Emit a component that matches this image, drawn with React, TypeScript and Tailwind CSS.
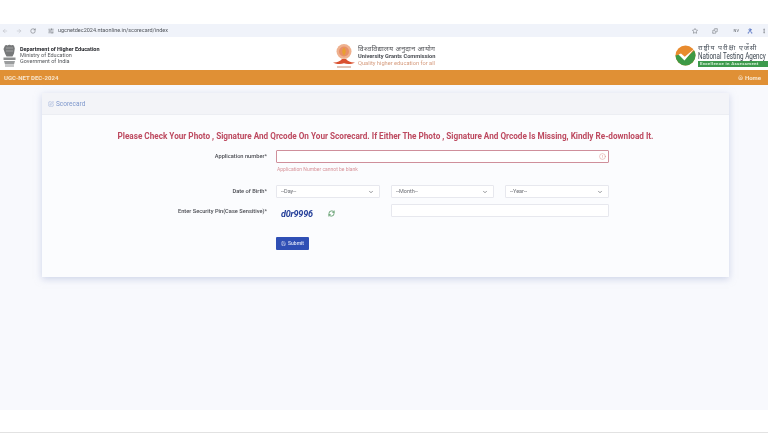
import { ArrowLeft, ArrowRight, RotateCw, SlidersHorizontal, Star, Puzzle, User, EllipsisVertical, ChevronDown, CircleAlert, RefreshCw, Save, SquarePen, House } from "lucide-react";

const font = { fontFamily: '"Roboto", "Liberation Sans", sans-serif' };
const hindi = { fontFamily: '"Noto Sans", "DejaVu Sans", serif' };

function Emblem() {
  return (
    <svg width="15" height="24" viewBox="0 0 15 24" fill="none" className="shrink-0">
      <path d="M3 1.500c1-.8 2-.6 2.600 0 .6-1 3-1 3.600 0 .8-.6 2-.6 2.800.2l.8 2.800-.8 5-1.500 3H4.500L3 9.500 1.500 5z" fill="#77797a" />
      <path d="M4 4h7M4 7h7" stroke="#a9abac" strokeWidth=".8" />
      <path d="M1.500 13.500h12v2.500h-12z" fill="#8c8e8f" />
      <path d="M2 17h11l-1 3.500H3z" fill="#9a9c9d" />
      <path d="M3 22h9" stroke="#a3a5a6" strokeWidth="1.200" />
    </svg>
  );
}

function UgcLogo() {
  return (
    <svg width="24" height="26" viewBox="0 0 24 26" fill="none" className="shrink-0">
      <circle cx="12" cy="8.500" r="7.500" fill="#eeb18f" />
      <circle cx="12" cy="8.500" r="5" fill="#e88f68" />
      <path d="M12 4.500c2 2 2.600 5 0 8-2.600-3-2-6 0-8z" fill="#e8a02f" />
      <path d="M1 19.500c4 .3 7-1 9-3.500h4c2 2.500 5 3.800 9 3.500-3.500 1.800-8 2-11 .8-3 1.200-7.500 1-11-.8z" fill="#d9502f" />
      <path d="M5 24h14" stroke="#c58b70" strokeWidth="1" />
    </svg>
  );
}

function NtaLogo() {
  return (
    <svg width="21" height="21" viewBox="0 0 21 21" fill="none" className="shrink-0">
      <circle cx="10.500" cy="10.500" r="10" fill="#e88b2e" />
      <path d="M.5 10.500a10 10 0 0 0 20 0c0-1.800-.5-3.500-1.300-5L10 14 5 9.500z" fill="#3d9a45" />
      <path d="M3.500 9.500 9.500 15.500 19.500 3.500 9.800 11.800 6 8.500z" fill="#fff" />
    </svg>
  );
}

function Toolbar() {
  return (
    <div className="h-[13px] bg-[#f0f3fa] flex items-center text-[#5f6368]">
      <div className="flex items-center w-[44px] justify-between pl-[2px] pr-[8px]">
        <ArrowLeft size={6} strokeWidth={1.500} className="text-[#a0a4aa]" />
        <ArrowRight size={6} strokeWidth={1.500} className="text-[#a0a4aa]" />
        <RotateCw size={6} strokeWidth={2} />
      </div>
      <div className="flex-1 h-[13px] flex items-center pl-[4px] gap-[4px]">
        <SlidersHorizontal size={6} strokeWidth={2} />
        <span className="text-[5.500px] leading-none text-[#50545a]">ugcnetdec2024.ntaonline.in/scorecard/index</span>
      </div>
      <div className="flex items-center pr-[1px]">
        <Star size={6} strokeWidth={2} />
        <Puzzle size={6} strokeWidth={2} className="ml-[14px]" />
        <span className="text-[4px] leading-none ml-[16px]">NV</span>
        <User size={6} strokeWidth={3} className="text-[#3f5fb8] ml-[8px]" />
        <EllipsisVertical size={6} strokeWidth={2} className="ml-[8px]" />
      </div>
    </div>
  );
}

function Header() {
  return (
    <div className="h-[30px] bg-white flex items-center pt-[1px]">
      <div className="flex items-center w-[332px] pl-[2px] gap-[3px] shrink-0">
        <Emblem />
        <div className="flex flex-col text-[5.500px] leading-[6px] text-[#55585c] pb-[2px]">
          <span className="font-bold text-[#1d1f24]">Department of Higher Education</span>
          <span>Ministry of Education</span>
          <span>Government of India</span>
        </div>
      </div>
      <div className="flex items-center flex-1 gap-[2px]">
        <UgcLogo />
        <div className="flex flex-col text-[5.700px] leading-[7px] text-[#4d4f53]">
          <span className="text-[7px] leading-[8px] tracking-[.3px]" style={hindi}>विश्वविद्यालय अनुदान आयोग</span>
          <span className="font-bold text-[#494c52]">University Grants Commission</span>
          <span className="text-[#d59a7c]">Quality higher education for all</span>
        </div>
      </div>
      <div className="flex items-center w-[93px] gap-[2px] shrink-0">
        <NtaLogo />
        <div className="flex flex-col w-[70px] shrink-0 whitespace-nowrap">
          <span className="text-[7px] leading-[8px] text-[#48505a] tracking-[.9px]" style={hindi}>राष्ट्रीय परीक्षा एजेंसी</span>
          <span className="text-[8.500px] leading-[9px] text-[#3c4650] self-start origin-left scale-x-[0.74]">National Testing Agency</span>
          <span className="bg-[#3d9a4d] text-[#d8f0d8] text-[4.400px] leading-[6px] h-[6px] pl-[2px] font-bold tracking-[.3px]">Excellence in Assessment</span>
        </div>
      </div>
    </div>
  );
}

function SelectBox({ label, width }: { label: string; width: string }) {
  return (
    <div className={`${width} h-[13px] bg-white border border-[#e7e8ee] rounded-[1px] flex items-center justify-between pl-[4px] pr-[5px] text-[5.500px] text-[#6b6d73]`}>
      <span>{label}</span>
      <ChevronDown size={6} strokeWidth={2.500} className="text-[#55585e]" />
    </div>
  );
}

function Form() {
  return (
    <div className="flex flex-col">
      <h2 className="mt-[14px] text-center text-[8.180px] leading-[14px] font-bold text-[#bd4a60] whitespace-nowrap">
        Please Check Your Photo , Signature And Qrcode On Your Scorecard. If Either The Photo , Signature And Qrcode Is Missing, Kindly Re-download It.
      </h2>

      <div className="mt-[6px] flex items-center h-[14px]">
        <label className="w-[225px] mr-[9px] text-right text-[5.700px] font-medium text-[#4c4e54]">Application number*</label>
        <div className="w-[333px] h-[13px] bg-white border border-[#cf8f9b] rounded-[1px] flex items-center justify-end pr-[2px]">
          <CircleAlert size={7} strokeWidth={1.500} className="text-[#d9867f]" />
        </div>
      </div>
      <p className="ml-[235px] mt-[2px] text-[5px] leading-[8px] text-[#d8949a]">Application Number cannot be blank</p>

      <div className="mt-[12px] flex items-center h-[13px]">
        <label className="w-[225px] mr-[9px] text-right text-[5.700px] font-medium text-[#4c4e54]">Date of Birth*</label>
        <div className="w-[333px] flex justify-between">
          <SelectBox label="--Day--" width="w-[104px]" />
          <SelectBox label="--Month--" width="w-[103px]" />
          <SelectBox label="--Year--" width="w-[104px]" />
        </div>
      </div>

      <div className="mt-[6px] flex h-[13px]">
        <label className="w-[225px] mr-[9px] pt-[2px] text-right text-[5.700px] leading-[10px] font-medium text-[#4c4e54]">Enter Security Pin(Case Sensitive)*</label>
        <div className="w-[333px] flex items-start">
          <div className="w-[115px] flex items-center gap-[15px] pl-[5px] mt-[4px]">
            <span className="text-[9px] leading-[10px] font-bold italic text-[#26409a] tracking-[-.2px] translate-y-[1px]">d0r9996</span>
            <RefreshCw size={7} strokeWidth={2.500} className="text-[#3f8a4d]" />
          </div>
          <div className="flex-1 h-[13px] bg-white border border-[#e7e8ee] rounded-[1px]" />
        </div>
      </div>

      <div className="mt-[20px] ml-[234px]">
        <button className="w-[33px] h-[13px] bg-[#2f4fb5] rounded-[1px] flex items-center justify-center gap-[2px] text-[5px] text-[#dfe5f7] font-medium">
          <Save size={5} strokeWidth={2} />
          Submit
        </button>
      </div>
    </div>
  );
}

export default function App() {
  return (
    <div className="h-[433px] w-[768px] overflow-hidden bg-white flex flex-col blur-[0.5px]" style={font}>
      <div className="h-[24px] shrink-0 bg-white" />
      <Toolbar />
      <div className="h-[3px] bg-white" />
      <Header />
      <div className="h-[15px] bg-[#e09035] flex items-center justify-between pl-[4px] pr-[7px] text-[6px] font-bold text-[#f7e6cf]">
        <span>UGC-NET DEC-2024</span>
        <span className="flex items-center gap-[2px]">
          <House size={5} strokeWidth={3} />
          Home
        </span>
      </div>
      <div className="flex-1 bg-[#f8f9fd] pt-[8px] pl-[42px]">
        <div className="w-[687px] h-[184px] bg-[#fbfcfe] shadow-[0_2px_7px_rgba(170,180,215,0.55)]">
          <div className="h-[22px] bg-[#f3f4f8] border-b border-[#eceef3] flex items-center pl-[6px] gap-[2px] text-[6.500px] text-[#7d97cc]">
            <SquarePen size={6} strokeWidth={1.500} />
            <span className="translate-y-[1px]">Scorecard</span>
          </div>
          <Form />
        </div>
      </div>
      <div className="h-[23px] shrink-0 bg-white border-b border-[#e2e2e2]" />
    </div>
  );
}
